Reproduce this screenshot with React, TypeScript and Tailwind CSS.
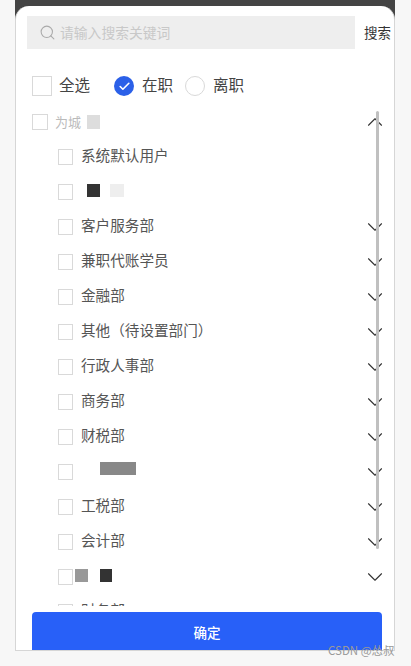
import { ChevronDown, ChevronUp, Search, Check } from 'lucide-react';

const font = { fontFamily: '"Noto Sans CJK SC", "Noto Sans", sans-serif' };

interface Row {
  label?: string;
  blocks?: { w: number; ml: number; color: string }[];
  up?: number;
  arrow?: boolean;
}

const rows: Row[] = [
  { label: '系统默认用户' },
  { blocks: [{ w: 13, ml: 6, color: '#333' }, { w: 14, ml: 10, color: '#eee' }] },
  { label: '客户服务部', arrow: true },
  { label: '兼职代账学员', arrow: true },
  { label: '金融部', arrow: true },
  { label: '其他（待设置部门）', arrow: true },
  { label: '行政人事部', arrow: true },
  { label: '商务部', arrow: true },
  { label: '财税部', arrow: true },
  { blocks: [{ w: 36, ml: 19, color: '#888' }], up: 7, arrow: true },
  { label: '工税部', arrow: true },
  { label: '会计部', arrow: true },
  { blocks: [{ w: 13, ml: -6, color: '#999' }, { w: 12, ml: 12, color: '#333' }], arrow: true },
  { label: '财务部' },
];

function DeptRow({ row }: { row: Row }) {
  return (
    <div className="h-[35px] shrink-0 flex items-center pl-[42px] pr-[6px]">
      <span className="w-[15px] h-[16px] border border-[#d9d9d9] shrink-0" />
      {row.label ? (
        <span className="ml-2 pb-[3px] text-[14.6px] text-[#555] leading-none">{row.label}</span>
      ) : (
        <span className="ml-2 flex items-center h-[14px]" style={{ marginBottom: row.up ?? 2 }}>
          {row.blocks?.map((b, i) => (
            <span
              key={i}
              className="h-[13px] block"
              style={{ width: b.w, marginLeft: b.ml, backgroundColor: b.color }}
            />
          ))}
        </span>
      )}
      {row.arrow && <ChevronDown className="ml-auto w-[26px] h-[26px] text-[#333]" strokeWidth={1} />}
    </div>
  );
}

export default function App() {
  return (
    <div className="relative w-[411px] h-[666px] overflow-hidden bg-[#f7f7f7]" style={font}>
      <div className="ml-[15px] w-[380px] h-[651px] bg-[#444] pt-[6px]">
        <div className="relative h-full bg-white rounded-t-[14px] border-x border-b border-[#d6d6d6] flex flex-col">
          {/* Search */}
          <div className="flex items-center pt-[10px] pl-[11px]">
            <div className="w-[328px] h-[33px] bg-[#eeeeee] flex items-center pl-[12px]">
              <Search className="w-[17px] h-[17px] text-[#aaa]" strokeWidth={1.5} />
              <span className="ml-[4px] text-[13.8px] text-[#c8c8c8]">请输入搜索关键词</span>
            </div>
            <span className="ml-[9px] text-[13.5px] text-[#333]">搜索</span>
          </div>

          {/* Filters */}
          <div className="flex items-center mt-[27px] pl-[16px]">
            <span className="w-[20px] h-[20px] border border-[#d9d9d9]" />
            <span className="ml-[7px] pb-[2px] text-[15.5px] text-[#444] leading-none">全选</span>
            <span className="ml-[24px] w-[20px] h-[20px] rounded-full bg-[#2b60e8] flex items-center justify-center">
              <Check className="w-[13px] h-[13px] text-white" strokeWidth={3} />
            </span>
            <span className="ml-[8px] pb-[2px] text-[15.5px] text-[#444] leading-none">在职</span>
            <span className="ml-[12px] w-[20px] h-[20px] rounded-full border border-[#d9d9d9]" />
            <span className="ml-[8px] pb-[2px] text-[15.5px] text-[#444] leading-none">离职</span>
          </div>

          {/* Department tree */}
          <div className="mt-[8px] h-[502px] overflow-hidden flex flex-col">
            <div className="h-[35px] shrink-0 flex items-center pl-[16px] pr-[6px]">
              <span className="w-[16px] h-[16px] border border-[#d9d9d9] shrink-0" />
              <span className="ml-[7px] flex items-center text-[13px] text-[#bbb] leading-none">
                为城<span className="ml-[6px] w-[13px] h-[14px] bg-[#ddd] block" />
              </span>
              <ChevronUp className="ml-auto w-[26px] h-[26px] text-[#333]" strokeWidth={1} />
            </div>
            {rows.map((row, i) => (
              <DeptRow key={i} row={row} />
            ))}
          </div>

          {/* Scrollbar thumb */}
          <span className="absolute left-[360px] top-[105px] w-[3px] h-[438px] bg-[#c0c0c0] rounded-[2px]" />

          {/* Confirm */}
          <div className="absolute left-[16px] bottom-0 w-[350px] h-[38px] pt-[2px] bg-[#2860f8] rounded-t-[4px] flex items-center justify-center text-[13.5px] font-medium text-white">
            确定
          </div>
        </div>
      </div>

      {/* Watermark */}
      <span className="absolute left-[328px] top-[642px] text-[11.5px] leading-[16px] text-[#999]">
        CSDN @怂叔
      </span>
    </div>
  );
}
